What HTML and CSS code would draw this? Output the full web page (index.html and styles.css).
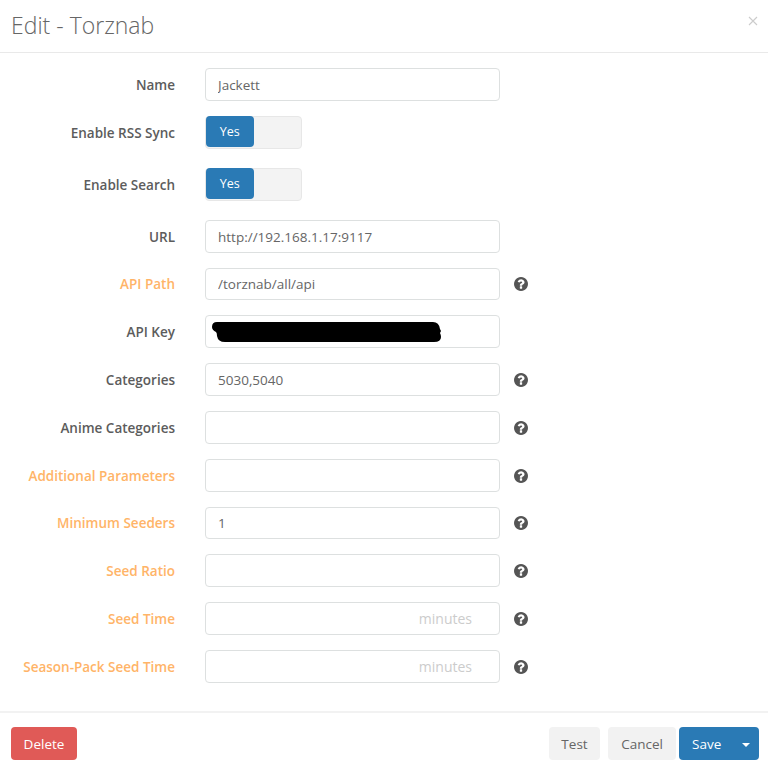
FILE: index.html
```html
<!DOCTYPE html>
<html lang="en">

<head>
    <meta charset="UTF-8" />
    <meta name="viewport" content="width=device-width, initial-scale=1.0" />
    <title>Edit - Torznab</title>
    <link rel="stylesheet" href="styles.css">
</head>

<body>
    <svg class="icon-defs" width="0" height="0">
        <symbol id="help" viewBox="0 128 1536 1536">
            <path d="M896 1376v-192q0-14-9-23t-23-9h-192q-14 0-23 9t-9 23v192q0 14 9 23t23 9h192q14 0 23-9t9-23zm256-672q0-88-55.5-163t-138.5-116-170-41q-243 0-371 213-15 24 8 42l132 100q7 6 19 6 16 0 25-12 53-68 86-92 34-24 86-24 48 0 85.5 26t37.5 59q0 38-20 61t-68 45q-63 28-115.5 86.5t-52.5 125.5v36q0 14 9 23t23 9h192q14 0 23-9t9-23q0-19 21.5-49.5t54.5-49.5q32-18 49-28.5t46-35 44.5-48 28-60.5 12.5-81zm384 192q0 209-103 385.5t-279.5 279.5-385.5 103-385.5-103-279.5-279.5-103-385.5 103-385.5 279.5-279.5 385.5-103 385.5 103 279.5 279.5 103 385.5z" />
        </symbol>
    </svg>

    <div class="modal">
        <div class="modal-header">
            <h3>Edit - Torznab</h3>
            <svg class="close" viewBox="0 0 10 10">
                <path d="M1 1l8 8M9 1l-8 8" />
            </svg>
        </div>

        <div class="modal-body">
            <div class="form-row">
                <label>Name</label>
                <input type="text" value="Jackett" />
            </div>

            <div class="form-row switch-row">
                <label>Enable RSS Sync</label>
                <div class="switch"><span class="switch-on">Yes</span></div>
            </div>

            <div class="form-row switch-row">
                <label>Enable Search</label>
                <div class="switch"><span class="switch-on">Yes</span></div>
            </div>

            <div class="form-row">
                <label>URL</label>
                <input type="text" value="http://192.168.1.17:9117" />
            </div>

            <div class="form-row advanced">
                <label>API Path</label>
                <input type="text" value="/torznab/all/api" />
                <svg class="help"><use href="#help" /></svg>
            </div>

            <div class="form-row">
                <label>API Key</label>
                <div class="input-wrap">
                    <input type="text" />
                    <svg class="redacted" viewBox="0 0 232 22">
                        <path d="M6 1H222q6 0 7 7l1 2-1 2q1 2 1 4 0 5-7 5H14q-7 0-8-6 0-3-1-4Q1 9 1 6q0-5 5-5z" />
                    </svg>
                </div>
            </div>

            <div class="form-row">
                <label>Categories</label>
                <input type="text" value="5030,5040" />
                <svg class="help"><use href="#help" /></svg>
            </div>

            <div class="form-row">
                <label>Anime Categories</label>
                <input type="text" />
                <svg class="help"><use href="#help" /></svg>
            </div>

            <div class="form-row advanced">
                <label>Additional Parameters</label>
                <input type="text" />
                <svg class="help"><use href="#help" /></svg>
            </div>

            <div class="form-row advanced">
                <label>Minimum Seeders</label>
                <input type="text" value="1" />
                <svg class="help"><use href="#help" /></svg>
            </div>

            <div class="form-row advanced">
                <label>Seed Ratio</label>
                <input type="text" />
                <svg class="help"><use href="#help" /></svg>
            </div>

            <div class="form-row advanced">
                <label>Seed Time</label>
                <div class="input-wrap">
                    <input type="text" />
                    <span class="unit">minutes</span>
                </div>
                <svg class="help"><use href="#help" /></svg>
            </div>

            <div class="form-row advanced">
                <label>Season-Pack Seed Time</label>
                <div class="input-wrap">
                    <input type="text" />
                    <span class="unit">minutes</span>
                </div>
                <svg class="help"><use href="#help" /></svg>
            </div>
        </div>

        <div class="modal-footer">
            <button class="btn btn-danger">Delete</button>
            <div class="footer-right">
                <button class="btn btn-test">Test</button>
                <button class="btn btn-cancel">Cancel</button>
                <div class="btn-save">
                    <span>Save</span>
                    <i class="caret"></i>
                </div>
            </div>
        </div>
    </div>
</body>

</html>
```

FILE: styles.css
```css
* {
    box-sizing: border-box;
}

body {
    margin: 0;
    font-family: "Open Sans", sans-serif;
    font-size: 13.5px;
    background-color: #fff;
    color: #555;
}

.icon-defs {
    position: absolute;
}

.modal {
    width: 768px;
    height: 771px;
    display: flex;
    flex-direction: column;
}

.modal-header {
    height: 53px;
    flex: none;
    display: flex;
    justify-content: space-between;
    padding: 10px 10px 0 11px;
    border-bottom: 1px solid #e9e9e9;
}

.modal-header h3 {
    margin: 0;
    font-size: 23px;
    font-weight: 300;
    line-height: 30px;
    color: #666;
}

.close {
    width: 10px;
    height: 10px;
    margin-top: 6px;
    fill: none;
    stroke: #ccc;
    stroke-width: 1.1;
}

.modal-body {
    flex: 1;
    padding-top: 15px;
}

.form-row {
    display: flex;
    align-items: center;
    height: 32.8px;
    margin-bottom: 15px;
}

.switch-row {
    margin-bottom: 19.2px;
}

.form-row label {
    width: 175px;
    margin-right: 30px;
    padding-top: 1px;
    text-align: right;
    font-weight: 600;
    color: #5c5c5c;
}

.form-row.advanced label {
    color: #ffb468;
}

input {
    display: block;
    width: 295px;
    height: 32.8px;
    padding: 1px 12px 0;
    border: 1px solid #dde0e0;
    border-radius: 4px;
    background: #fff;
    font: inherit;
    color: #666;
    outline: none;
}

.input-wrap {
    position: relative;
    width: 295px;
}

.unit {
    position: absolute;
    top: 7px;
    right: 28px;
    font-size: 14px;
    color: #ccc;
}

.redacted {
    position: absolute;
    left: 6px;
    top: 6px;
    width: 232px;
    height: 22px;
    fill: #000;
}

.help {
    width: 14px;
    height: 14px;
    margin: 1px 0 0 14px;
    fill: #555;
}

.switch {
    width: 97px;
    height: 32.8px;
    background-color: #f3f3f3;
    border: 1px solid #e7e7e7;
    border-radius: 4px;
}

.switch-on {
    display: block;
    width: 47.5px;
    height: 100%;
    margin: -0.5px 0 0 0;
    background-color: #2a7ab5;
    border-radius: 4px;
    color: #fff;
    font-size: 12.5px;
    line-height: 31px;
    text-align: center;
}

.modal-footer {
    height: 60px;
    flex: none;
    display: flex;
    justify-content: space-between;
    padding: 14px 9px 0 11px;
    border-top: 2px solid #f2f2f2;
}

.footer-right {
    display: flex;
}

.btn {
    height: 33px;
    padding: 0;
    border: none;
    border-radius: 4px;
    font: inherit;
    cursor: pointer;
}

.btn-danger {
    width: 66px;
    background-color: #e05a57;
    color: #fff;
}

.btn-test {
    width: 51px;
    margin-right: 8px;
    background-color: #f2f2f2;
    color: #666;
}

.btn-cancel {
    width: 68px;
    margin-right: 3px;
    background-color: #f2f2f2;
    color: #666;
}

.btn-save {
    width: 80px;
    height: 33px;
    display: flex;
    align-items: center;
    justify-content: space-between;
    padding: 0 9px 0 13px;
    background-color: #2a7ab5;
    border-radius: 4px;
    color: #fff;
}

.caret {
    width: 0;
    height: 0;
    margin-top: 2px;
    border-top: 4px solid #fff;
    border-left: 4px solid transparent;
    border-right: 4px solid transparent;
}
```
